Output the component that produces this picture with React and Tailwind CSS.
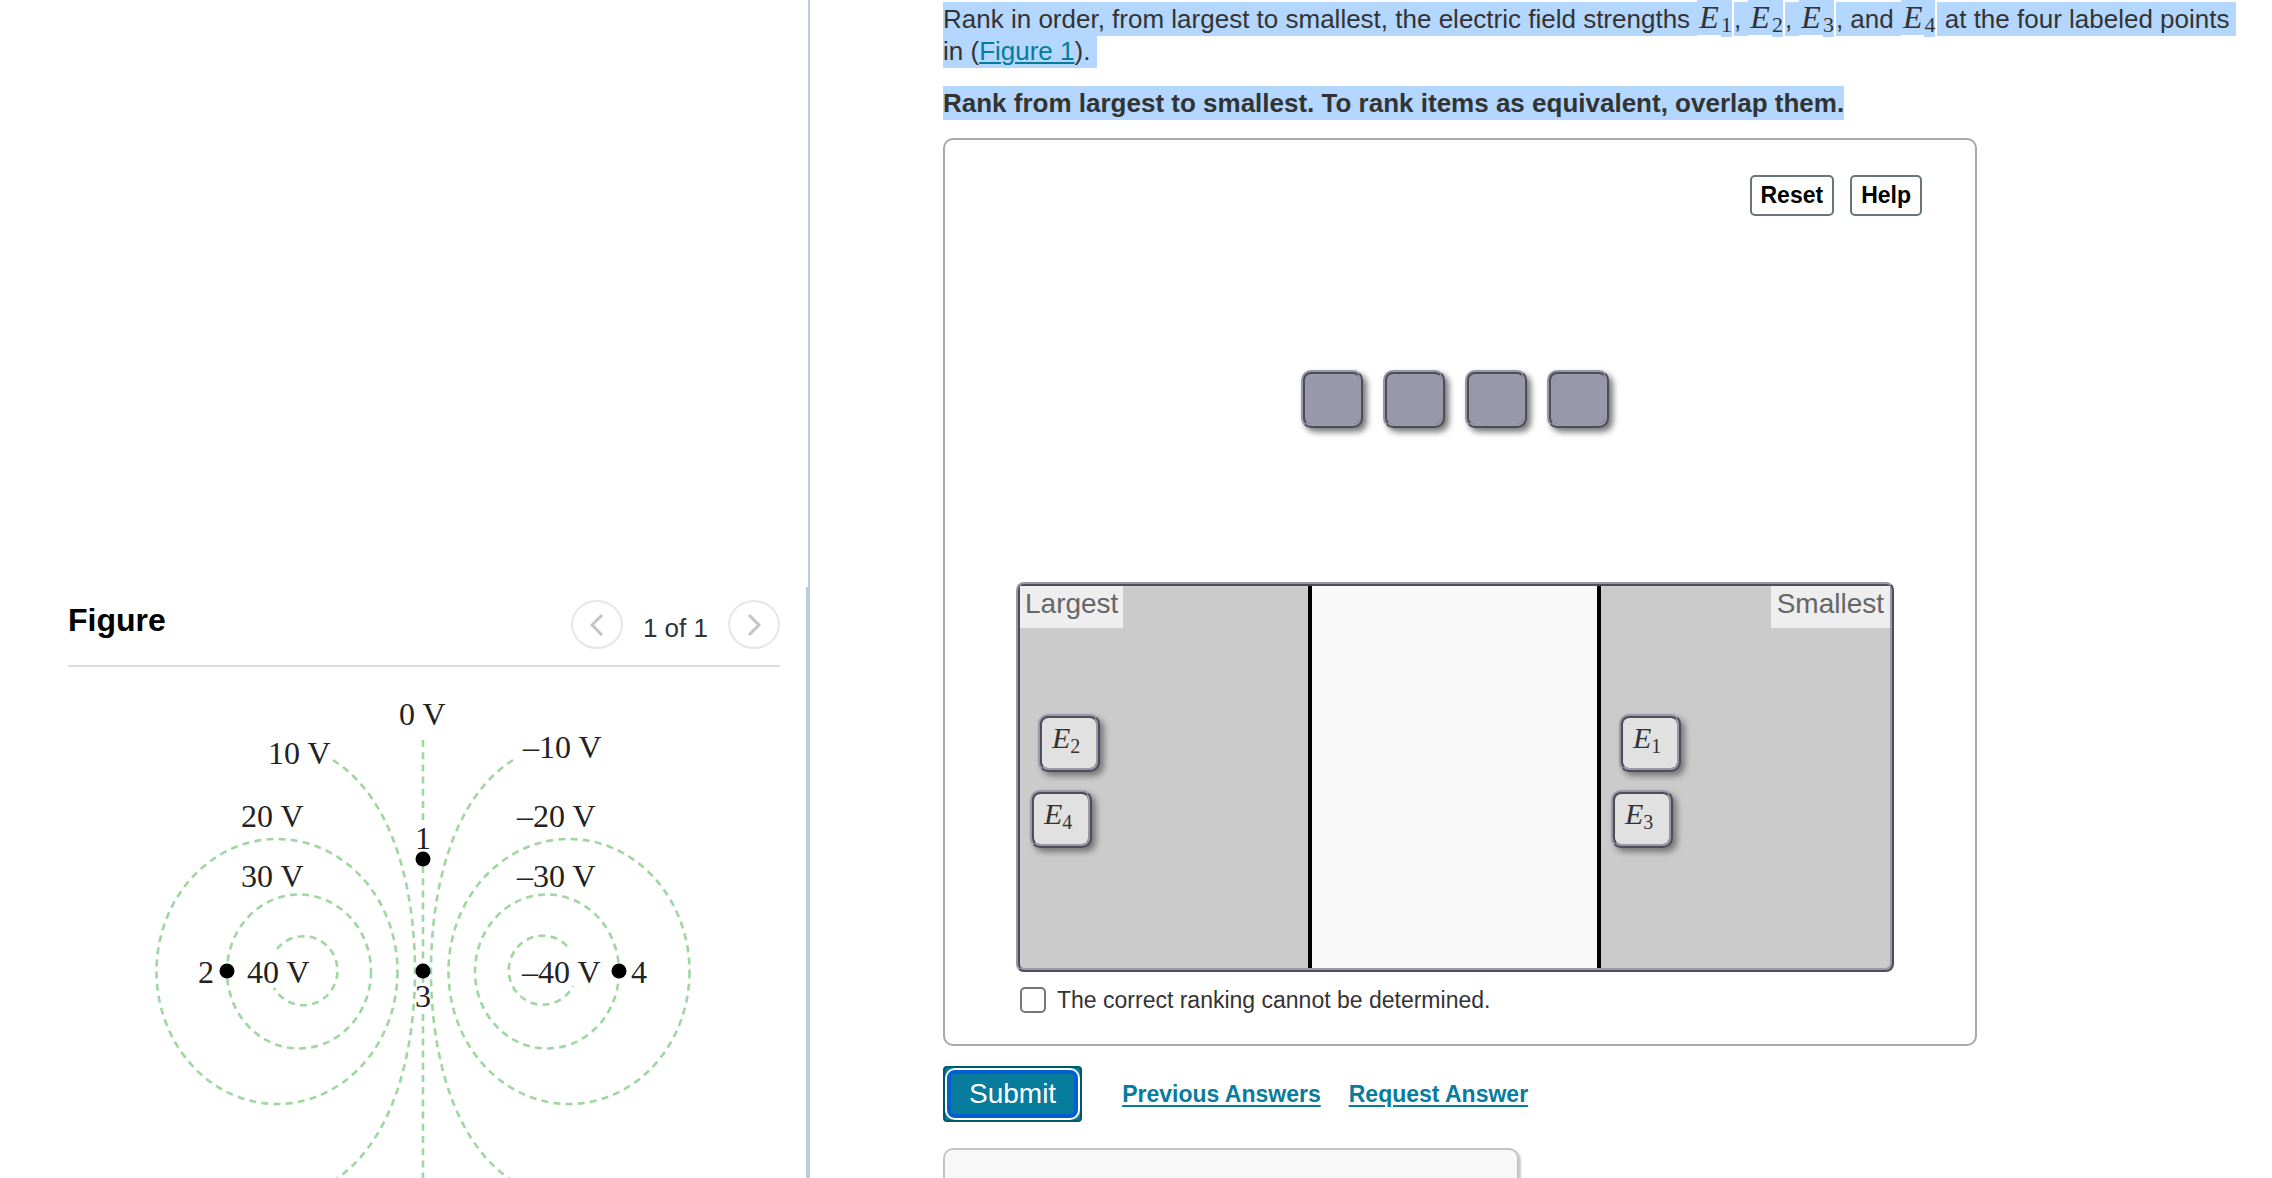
import React, { useState } from "react";

const volts = [
  { text: "0 V", x: 331, y: 57 },
  { text: "10 V", x: 200, y: 96 },
  { text: "20 V", x: 173, y: 159 },
  { text: "30 V", x: 173, y: 219 },
  { text: "40 V", x: 179, y: 315 },
  { text: "–10 V", x: 455, y: 90 },
  { text: "–20 V", x: 449, y: 159 },
  { text: "–30 V", x: 449, y: 219 },
  { text: "–40 V", x: 454, y: 315 },
  { text: "1", x: 347, y: 181 },
  { text: "2", x: 130, y: 315 },
  { text: "3", x: 347, y: 339 },
  { text: "4", x: 563, y: 315 },
];

const dots = [
  [355, 191],
  [159, 303],
  [355, 303],
  [551, 303],
];

const Equipotentials = () => (
  <svg viewBox="0 0 712 510" className="block w-full" role="img" aria-label="Equipotential lines">
    <g fill="none" stroke="#a0d6a0" strokeWidth="2.6" strokeDasharray="7 5.2">
      <path d="M355 72V152M355 198V318M355 346V510" />
      <path d="M265 92C328 132 347 227 347 303S328 473 264 514" />
      <path d="M445 92C382 132 363 227 363 303S382 473 446 514" />
      <ellipse cx="209" cy="303.5" rx="120.5" ry="132.5" />
      <ellipse cx="501" cy="303.5" rx="120.5" ry="132.5" />
      <ellipse cx="231" cy="303.5" rx="72" ry="77" />
      <ellipse cx="479" cy="303.5" rx="72" ry="77" />
      <path d="M209 281A34 34.5 0 1 1 206 320" />
      <path d="M499 278A34 34.5 0 1 0 505 318" />
    </g>
    {dots.map(([x, y]) => (
      <circle key={`${x}-${y}`} cx={x} cy={y} r="7.5" />
    ))}
    {volts.map((v) => (
      <text key={v.text} x={v.x} y={v.y} className="fill-[#222] font-['Liberation_Serif',serif] text-[32px]">
        {v.text}
      </text>
    ))}
  </svg>
);

const Chevron = ({ d }) => (
  <svg viewBox="0 0 14 24" className="h-6 w-[14px]" fill="none" stroke="#c4c4c4" strokeWidth="3">
    <path d={d} />
  </svg>
);

const NavButton = ({ label, d }) => (
  <button
    type="button"
    aria-label={label}
    className="flex h-[49px] w-[52px] items-center justify-center rounded-[50%] border-2 border-[#e6e6e6]"
  >
    <Chevron d={d} />
  </button>
);

// E with a subscript, inside the highlighted sentence
const Field = ({ n }) => (
  <>
    <span className="bg-[#b3d7ff] px-[2px] font-['Liberation_Serif',serif] text-[32px] leading-0 italic">E</span>
    <span className="mr-[2px] bg-[#b3d7ff] pt-3 align-[-4px] font-['Liberation_Serif',serif] text-[22px] leading-0">
      {n}
    </span>
  </>
);

const Tile = ({ n, className = "" }) => (
  <button
    type="button"
    className={`h-[58px] w-[62px] rounded-[10px] border-4 border-[#9998aa] bg-[#e1e1e1] pl-[10px] text-left font-['Liberation_Serif',serif] text-[30px] leading-[40px] text-[#333] shadow-[4px_4px_6px_#777] [border-style:ridge] ${className}`}
  >
    <span className="block h-[50px]">
      <i>E</i>
      <sub className="text-[20px]">{n}</sub>
    </span>
  </button>
);

const mark = "bg-[#b3d7ff] py-[2px]";

const App = () => {
  const [undetermined, setUndetermined] = useState(false);

  return (
    <div className="grid h-screen grid-cols-[405fr_731fr] overflow-hidden bg-white font-['Liberation_Sans',Arial,sans-serif] text-[#333]">
      <aside className="grid min-h-0 grid-rows-[587fr_591fr]">
        <div className="border-r-2 border-[#b9cddf]" />
        <section className="min-h-0 overflow-hidden border-r-4 border-[#b9cddf] pr-[26px] pl-[68px]">
          <header className="mb-px flex h-20 items-start justify-between border-b-2 border-[#ddd] pt-[13px]">
            <h2 className="text-[32px] leading-[40px] font-bold text-black">Figure</h2>
            <div className="flex items-center gap-5">
              <NavButton label="Previous figure" d="M12 2L2 12l10 10" />
              <span className="pt-[6px] text-[26px] leading-8">1 of 1</span>
              <NavButton label="Next figure" d="M2 2l10 10L2 22" />
            </div>
          </header>
          <Equipotentials />
        </section>
      </aside>

      <main className="min-h-0 overflow-hidden pt-[3px] pr-6 pl-[133px] text-[26px] leading-8">
        <p>
          <span className={mark}>Rank in order, from largest to smallest, the electric field strengths </span>
          <Field n="1" />
          <span className={mark}>, </span>
          <Field n="2" />
          <span className={mark}>, </span>
          <Field n="3" />
          <span className={mark}>, and </span>
          <Field n="4" />
          <span className={`${mark} box-decoration-clone pr-[7px]`}>
            {" "}at the four labeled points in (
            <a href="#figure" className="text-[#077c9c] underline decoration-2 underline-offset-2">
              Figure 1
            </a>
            ).
          </span>
        </p>
        <p className="mt-5 font-bold">
          <span className={mark}>Rank from largest to smallest. To rank items as equivalent, overlap them.</span>
        </p>

        <section className="mt-[19px] max-w-[1034px] rounded-[10px] border-2 border-[#a9a9a9] pt-[35px] pr-[81px] pb-[31px] pl-[71px]">
          <div className="-mr-7 flex justify-end gap-4 text-[23px] font-bold text-black">
            <button type="button" className="h-[41px] rounded-[5px] border-2 border-[#67757c] px-[9px] leading-[37px]">
              Reset
            </button>
            <button type="button" className="h-[41px] rounded-[5px] border-2 border-[#67757c] px-[9px] leading-[37px]">
              Help
            </button>
          </div>

          <div className="mt-[154px] flex justify-center gap-5">
            {[1, 2, 3, 4].map((slot) => (
              <div
                key={slot}
                className="h-[58px] w-[62px] rounded-[10px] border-4 border-[#9998aa] bg-[#9998aa] shadow-[4px_4px_6px_#777] [border-style:ridge]"
              />
            ))}
          </div>

          <div className="mt-[154px] grid h-[390px] grid-cols-[288fr_293fr_289fr] rounded-[8px] border-4 border-[#9998aa] bg-[#cbcbcb] [border-style:ridge]">
            <div>
              <div className="flex h-[128px] items-start">
                <span className="h-[42px] bg-[#eee] px-[5px] text-[28px] leading-[36px] text-[#666]">Largest</span>
              </div>
              <div className="flex flex-col items-start gap-[18px] pl-[10px]">
                <Tile n="2" className="ml-2" />
                <Tile n="4" />
              </div>
            </div>
            <div className="border-x-4 border-black bg-[#f8f8f8]" />
            <div>
              <div className="flex h-[128px] items-start justify-end">
                <span className="h-[42px] bg-[#eee] px-[6px] text-[28px] leading-[36px] text-[#666]">Smallest</span>
              </div>
              <div className="flex flex-col items-start gap-[18px] pl-[10px]">
                <Tile n="1" className="ml-2" />
                <Tile n="3" />
              </div>
            </div>
          </div>

          <label className="mt-[15px] ml-1 flex h-[26px] items-center gap-[11px] text-[23px]">
            <input
              type="checkbox"
              checked={undetermined}
              onChange={(e) => setUndetermined(e.target.checked)}
              className="size-[26px] appearance-none rounded-[5px] border-2 border-[#767676] bg-white checked:bg-[#077c9c]"
            />
            The correct ranking cannot be determined.
          </label>
        </section>

        <div className="mt-5 flex items-center text-[23px] font-bold text-[#077c9c]">
          <button
            type="button"
            className="h-14 rounded-[4px] border-2 border-[#02586b] bg-[#077c9c] text-[28px] font-normal text-white"
          >
            <span className="block h-full rounded-[10px] border-2 border-white bg-white">
              <span className="block h-full rounded-[8px] border-4 border-[#0060d0] bg-[#077c9c] px-[18px] leading-[40px]">
                Submit
              </span>
            </span>
          </button>
          <a href="#previous" className="ml-10 underline decoration-2 underline-offset-3">
            Previous Answers
          </a>
          <a href="#request" className="ml-7 underline decoration-2 underline-offset-3">
            Request Answer
          </a>
        </div>

        <div className="mt-[26px] h-20 max-w-[576px] rounded-[10px] border-2 border-[#c4c4c4] bg-[#f8f8f8] shadow-[2px_2px_2px_#ccc]" />
      </main>
    </div>
  );
};

export default App;
